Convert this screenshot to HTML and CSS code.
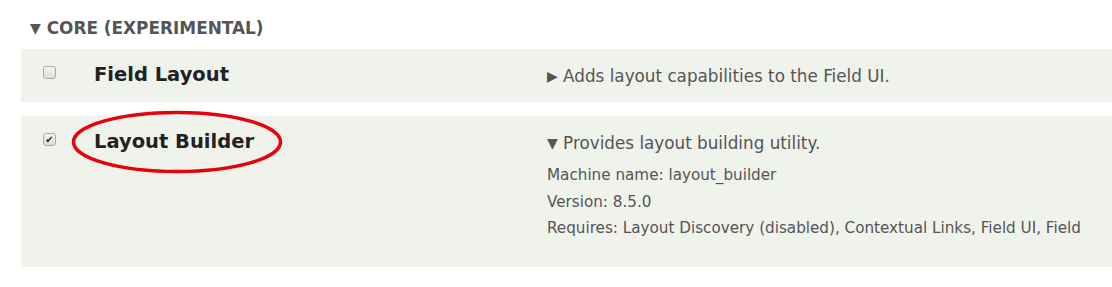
FILE: index.html
```html
<!DOCTYPE html>
<html lang="en">
<head>
<meta charset="UTF-8" />
<title>Modules</title>
<link rel="stylesheet" href="styles.css">
</head>
<body>
  <div class="package">
    <div class="package-title"><span class="arrow">▼</span> CORE (EXPERIMENTAL)</div>

    <div class="module">
      <div class="cell-check"><span class="checkbox"></span></div>
      <div class="cell-name">Field Layout</div>
      <div class="cell-desc">
        <div class="summary"><span class="arrow">▶</span> Adds layout capabilities to the Field UI.</div>
      </div>
    </div>

    <div class="module">
      <div class="cell-check"><span class="checkbox checked">✔</span></div>
      <div class="cell-name marked">
        Layout Builder
        <svg class="circle" width="216" height="68" viewBox="0 0 216 68">
          <ellipse cx="108" cy="34" rx="103.5" ry="29.5" fill="none" stroke="#e8000b" stroke-width="3.5"/>
        </svg>
      </div>
      <div class="cell-desc open">
        <div class="summary"><span class="arrow">▼</span> Provides layout building utility.</div>
        <div class="details">
          <div class="detail">Machine name: layout_builder</div>
          <div class="detail">Version: 8.5.0</div>
          <div class="detail">Requires: Layout Discovery (disabled), Contextual Links, Field UI, Field</div>
        </div>
      </div>
    </div>
  </div>
</body>
</html>
```

FILE: styles.css
```css
:root {
  --row-bg: #f0f2ec;
  --text: #222;
  --muted: #555;
  --font: 'DejaVu Sans', sans-serif;
}

body {
  margin: 0;
  font-family: var(--font);
  background: #fff;
  color: var(--text);
}

.package {
  padding: 17.5px 0 0 21px;
}

.package-title {
  font-weight: bold;
  font-size: 16.9px;
  line-height: 20px;
  color: var(--muted);
  padding-left: 9px;
  height: 31.5px;
}

.arrow {
  font-size: 14px;
  line-height: 1;
  position: relative;
  top: -1px;
}

.module {
  display: grid;
  grid-template-columns: 73px 453px 1fr;
  background: var(--row-bg);
  margin-bottom: 14px;
}

.cell-check {
  padding: 17px 0 0 22px;
}

.checkbox {
  display: block;
  width: 11px;
  height: 11px;
  border: 1px solid #aaa;
  border-radius: 3px;
  background: linear-gradient(#f4f4f4, #dcdcdc);
  font-size: 10px;
  line-height: 11px;
  text-align: center;
  color: #222;
}

.cell-name {
  font-weight: bold;
  font-size: 19.5px;
  line-height: 24px;
  padding-top: 14px;
  position: relative;
}

.cell-name .circle {
  position: absolute;
  left: -25px;
  top: -8.5px;
}

.cell-desc {
  padding: 17px 0 16px 0;
  font-size: 16.8px;
  color: var(--muted);
}

.summary {
  line-height: 20px;
}

.open {
  padding-bottom: 25.5px;
}

.details {
  margin-top: 9px;
}

.detail {
  font-size: 15.2px;
  line-height: 26.5px;
}
```
